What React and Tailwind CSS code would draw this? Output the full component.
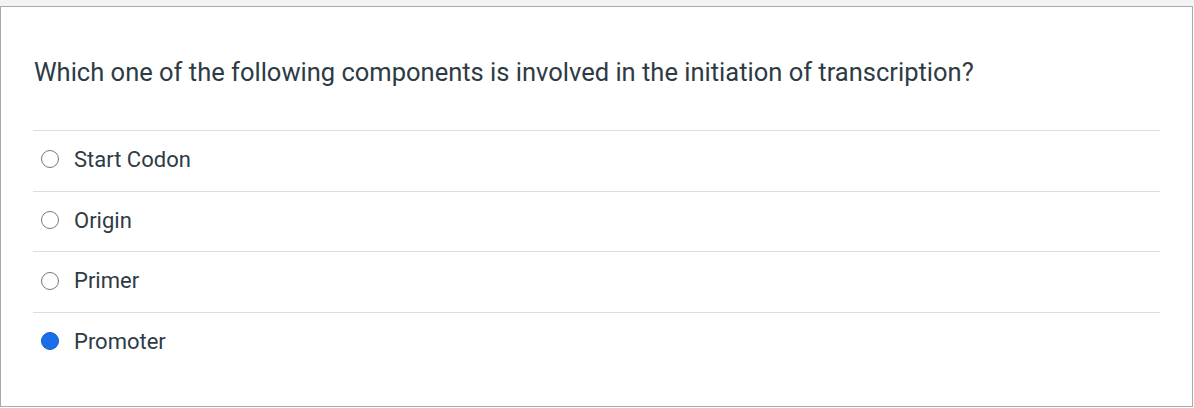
import React from 'react';

const options = [
  { id: 'a', label: 'Start Codon' },
  { id: 'b', label: 'Origin' },
  { id: 'c', label: 'Primer' },
  { id: 'd', label: 'Promoter', checked: true },
];

function Radio({ checked }) {
  if (checked) {
    return (
      <span className="w-[18px] h-[18px] rounded-full bg-[#1a6fe8] border-[1.5px] border-[#0d5bd0] flex-shrink-0" />
    );
  }
  return <span className="w-[18px] h-[18px] rounded-full bg-white border-[1.5px] border-[#7a7a7a] flex-shrink-0" />;
}

export default function App() {
  return (
    <div className="w-[1194px] h-[408px] bg-white font-['Roboto',sans-serif] text-[#2d3b45]">
      <div className="h-[6px] bg-[#f3f3f3]" />
      <div className="w-[1193px] h-[401px] border border-[#aaaaaa] pl-[32px] pr-[32px]">
        <p className="pt-[50px] pl-[1px] text-[25.5px] leading-[30px]">
          Which one of the following components is involved in the initiation of transcription?
        </p>
        <div className="mt-[43px]">
          {options.map((o) => (
            <label key={o.id} className="flex items-center h-[60.7px] border-t border-[#dddddd] pl-[8px] pb-[3px] gap-[15px]">
              <Radio checked={o.checked} />
              <span className="text-[22px]">{o.label}</span>
            </label>
          ))}
        </div>
      </div>
    </div>
  );
}
